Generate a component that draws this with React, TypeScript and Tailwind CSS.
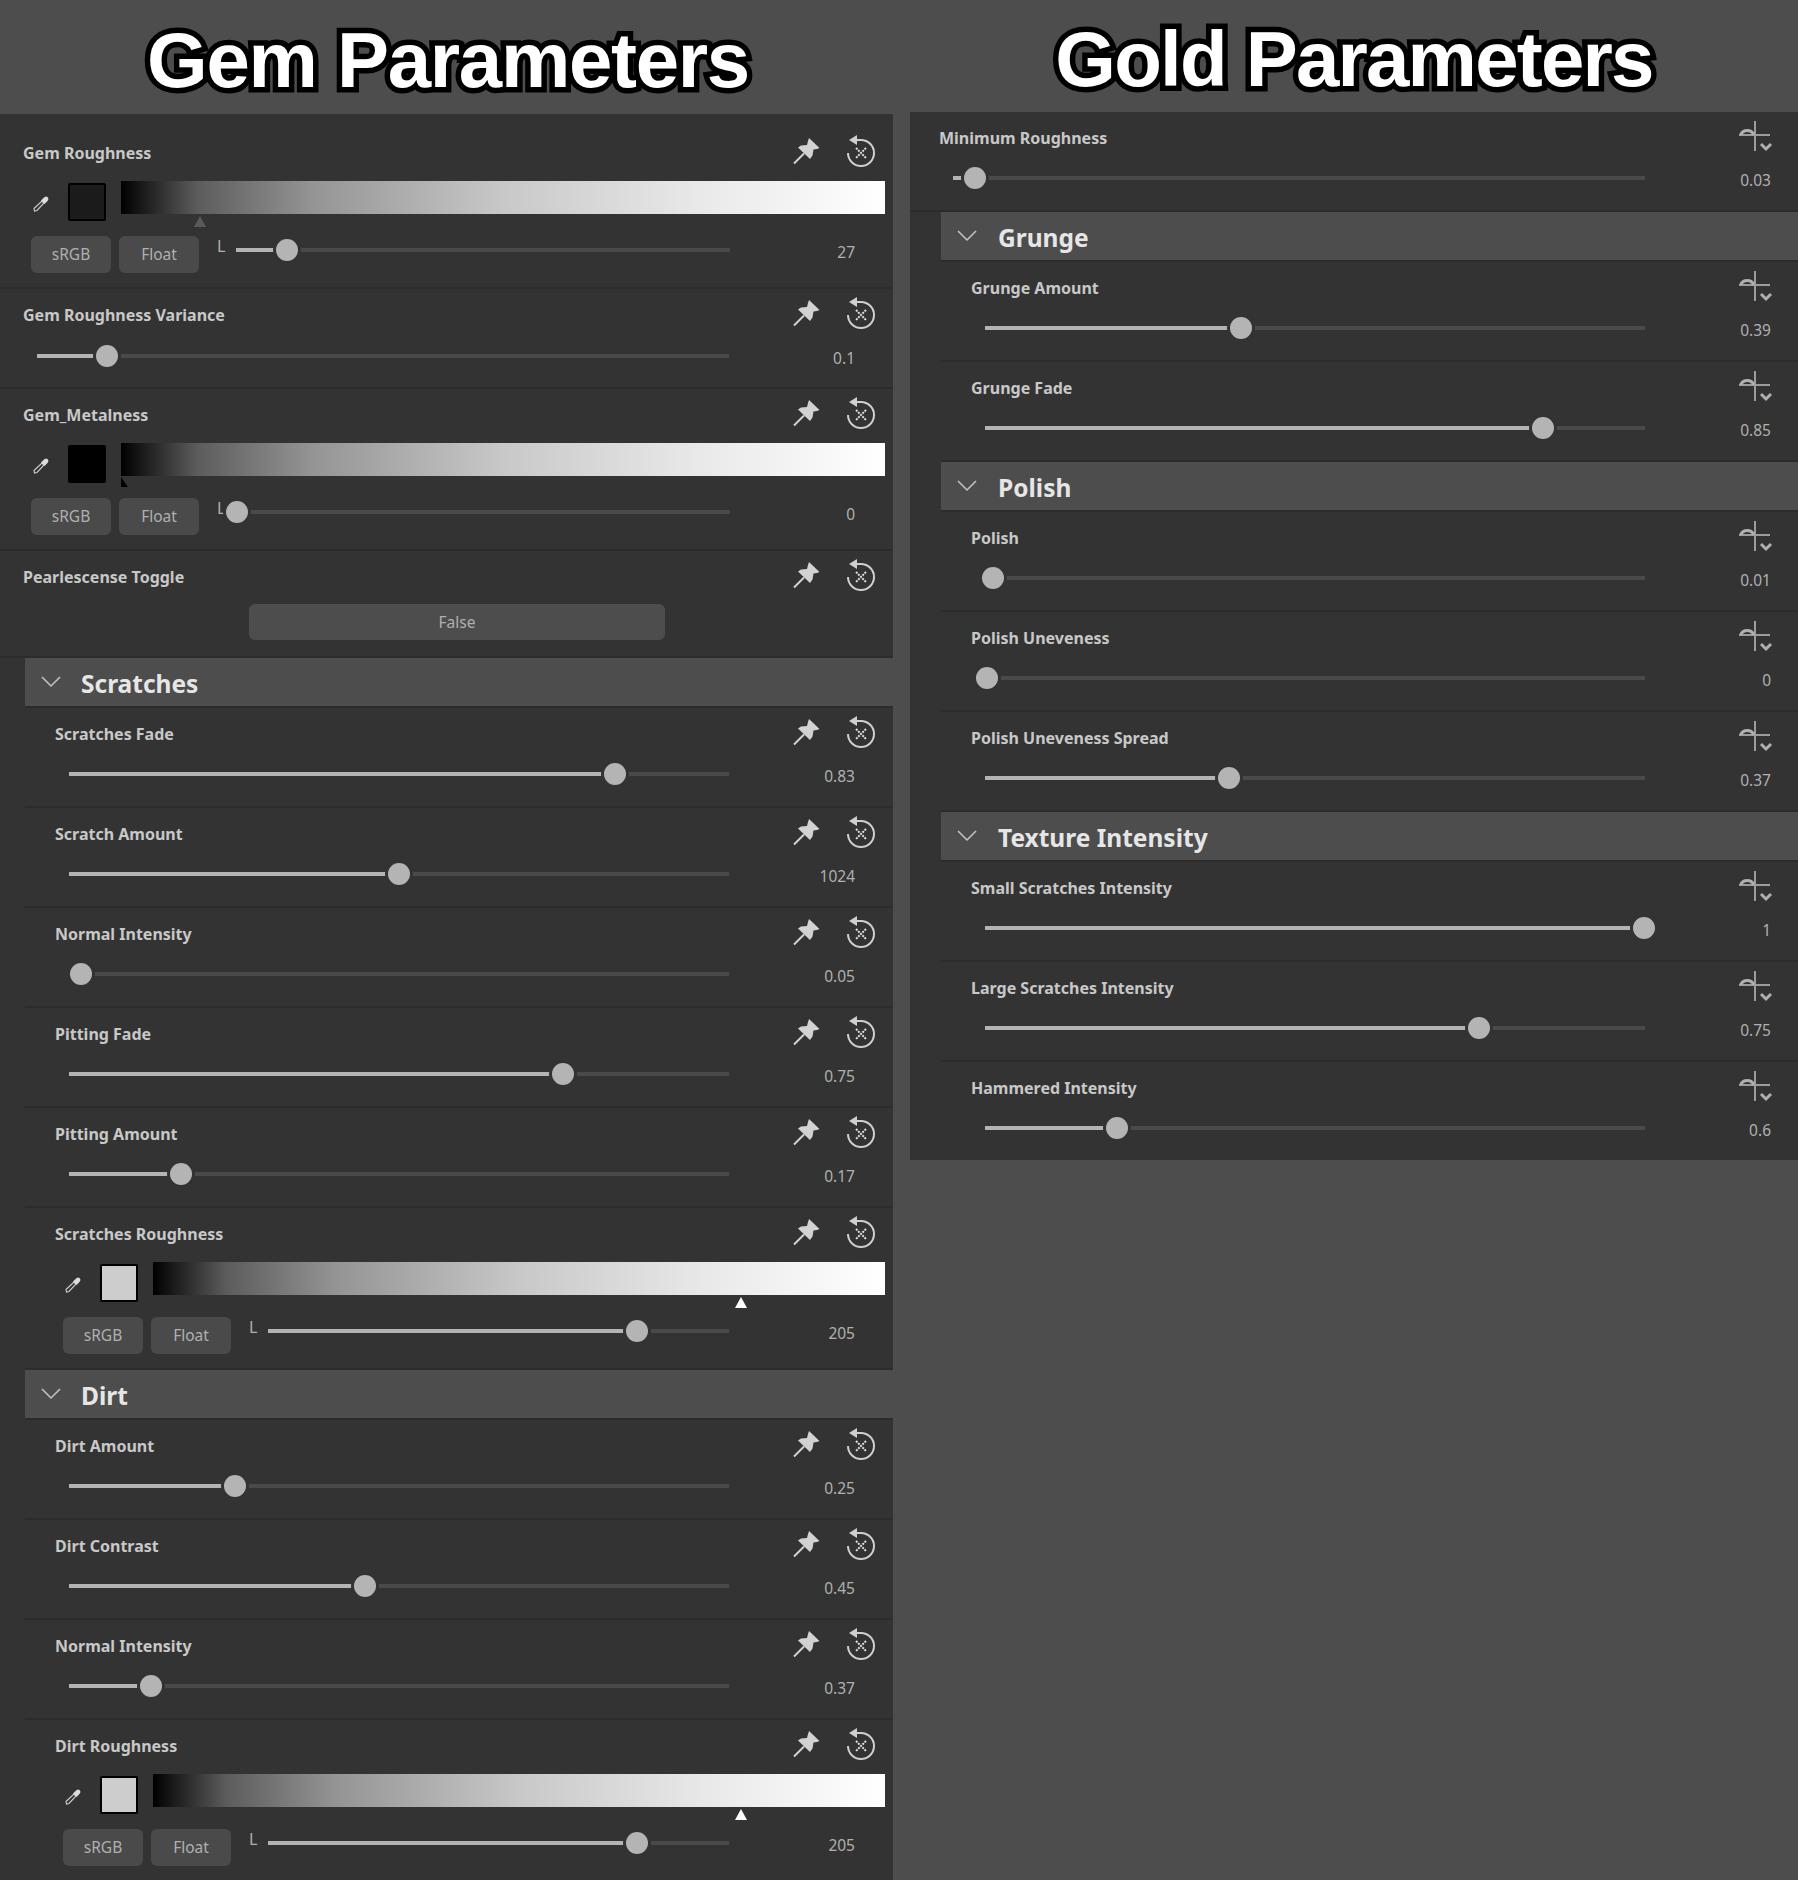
import React from 'react'

const labelFont = { fontFamily: '"Noto Sans", sans-serif' }

function PinIcon() {
  return (
    <svg width="27" height="27" viewBox="0 0 27 27" className="shrink-0 -mt-[3px]">
      <path d="M16 0 L26.5 10 L24 11 L20.5 11.5 L19.5 17.5 L17 21 L5 9.5 L8 7.5 L14 7 L15 3 Z" fill="#d2d2d2" />
      <path d="M11 15.5 L1 25.5" stroke="#d2d2d2" strokeWidth="2" />
    </svg>
  )
}

function ResetIcon() {
  return (
    <svg width="32" height="34" viewBox="0 0 32 34" className="shrink-0 -mt-[2px]">
      <path d="M11 5 H16 A13 13 0 1 1 3 18" fill="none" stroke="#cfcfcf" strokeWidth="2" />
      <path d="M4 5 L12 0 L12 10 Z" fill="#cfcfcf" />
      <path d="M11 13 L21 23 M21 13 L11 23" stroke="#e0e0e0" strokeWidth="2" strokeDasharray="2 1" />
    </svg>
  )
}

function CurveIcon() {
  return (
    <svg width="36" height="34" viewBox="0 0 36 34" className="shrink-0 -translate-y-[2px]">
      <path d="M17 2 V32 M1 16 H32" stroke="#9c9c9c" strokeWidth="2" fill="none" />
      <path d="M2.5 16 A7.5 8 0 0 1 16 16" stroke="#b0b0b0" strokeWidth="3" fill="none" />
      <path d="M23 25 L28 30 L33 25" stroke="#b0b0b0" strokeWidth="3" fill="none" />
    </svg>
  )
}

function Dropper() {
  return (
    <svg width="16" height="16" viewBox="0 0 16 16" className="shrink-0 mt-[15px]">
      <path d="M9 5 L11 7 L4 14.5 L1.5 15 L1 12.5 Z" fill="none" stroke="#cfcfcf" strokeWidth="1.1" />
      <path d="M8 4.5 L10.5 2 Q12.5 -0.5 14.5 1 Q16.5 3 14 5.5 L11.5 8 Z" fill="#dcdcdc" />
    </svg>
  )
}

function Chevron() {
  return (
    <svg width="20" height="12" viewBox="0 0 20 12" className="shrink-0">
      <path d="M1 1 L10 10 L19 1" fill="none" stroke="#c4c4c4" strokeWidth="1.5" />
    </svg>
  )
}

function Track({ width, thumb }: { width: string; thumb: number }) {
  return (
    <div className={`relative h-[4px] shrink-0 bg-[#4a4a4a] ${width}`}>
      <div className="absolute left-0 inset-y-0 bg-[#b4b4b4]" style={{ width: thumb }} />
      <div
        className="absolute -top-[9px] w-[22px] h-[22px] rounded-full bg-[#b4b4b4] ring-3 ring-[#333333]"
        style={{ left: thumb - 11 }}
      />
    </div>
  )
}

function Header({ label, right }: { label: string; right: boolean }) {
  return (
    <div className="flex items-center justify-between h-6">
      <span className="text-[16px] font-bold text-[#c8c8c8]" style={labelFont}>{label}</span>
      {right ? (
        <CurveIcon />
      ) : (
        <div className="flex items-center gap-[25px]">
          <PinIcon />
          <ResetIcon />
        </div>
      )}
    </div>
  )
}

interface SliderRowProps {
  label: string
  value: string
  thumb: number
  side: 'left' | 'right'
  grouped?: boolean
  last?: boolean
}

function SliderRow({ label, value, thumb, side, grouped, last }: SliderRowProps) {
  const right = side === 'right'
  let pad = 'pl-[23px] pr-[16px]'
  if (right) pad = grouped ? 'ml-[31px] pl-[30px] pr-[24px]' : 'pl-[29px] pr-[24px]'
  else if (grouped) pad = 'ml-[25px] pl-[30px] pr-[16px]'
  return (
    <div className={`${pad} pt-[14px] box-border ${last ? 'h-[98px]' : 'h-[100px] border-b-2 border-[#2c2c2c]'}`}>
      <Header label={label} right={right} />
      <div className={`flex items-center h-10 pl-[14px] ${!right && !grouped ? 'mt-[9px]' : 'mt-2'}`}>
        <Track width={grouped ? 'w-[660px]' : 'w-[692px]'} thumb={thumb} />
        <span
          className={`ml-auto mt-[5px] text-[15.5px] text-[#b0b0b0] ${right ? 'pr-[3px]' : 'pr-[22px]'}`}
          style={labelFont}
        >
          {value}
        </span>
      </div>
    </div>
  )
}

interface ColorRowProps {
  label: string
  swatch: string
  marker: number
  markerColor: string
  value: string
  thumb: number
  grouped?: boolean
  first?: boolean
}

function ColorRow({ label, swatch, marker, markerColor, value, thumb, grouped, first }: ColorRowProps) {
  return (
    <div className={`box-border border-b-2 border-[#2c2c2c] ${grouped ? 'ml-[25px]' : ''} ${first ? 'h-[175px] pt-[27px]' : 'h-[162px] pt-[14px]'}`}>
      <div className={grouped ? 'pl-[30px] pr-[16px]' : 'pl-[23px] pr-[16px]'}>
        <Header label={label} right={false} />
      </div>
      <div className={`flex items-start h-[41px] mt-4 pr-2 ${grouped ? 'pl-[40px]' : 'pl-[33px]'}`}>
        <Dropper />
        <div className="w-[38px] h-[38px] ml-[19px] mt-[2px] shrink-0 rounded-[2px] border-2 border-black" style={{ background: swatch }} />
        <div className="relative flex-1 h-[33px] ml-[15px] bg-[linear-gradient(to_right,#000_0%,#1c1c1c_3%,#5c5c5c_10%,#949494_25%,#c8c8c8_50%,#e8e8e8_75%,#fff_100%)]">
          {marker === 0 ? (
            <svg width="8" height="11" viewBox="0 0 8 11" className="absolute top-[34px] left-0">
              <path d="M0 0 L7 10 L0 10 Z" fill={markerColor} />
            </svg>
          ) : (
            <svg width="12" height="11" viewBox="0 0 12 11" className="absolute top-[35px]" style={{ left: marker - 6 }}>
              <path d="M6 0 L12 11 L0 11 Z" fill={markerColor} />
            </svg>
          )}
        </div>
      </div>
      <div className={`flex items-start mt-[14px] ${grouped ? 'pl-[38px]' : 'pl-[31px]'}`}>
        <div className="flex gap-2">
          {['sRGB', 'Float'].map((b) => (
            <div key={b} className="flex items-center justify-center w-20 h-[37px] rounded-md bg-[#4a4a4a] text-[15.5px] text-[#b0b0b0]" style={labelFont}>{b}</div>
          ))}
        </div>
        <span className="w-[19px] ml-[18px] text-[16px] leading-5 text-[#b0b0b0]" style={labelFont}>L</span>
        <div className="mt-[12px]">
          <Track width={grouped ? 'w-[461px]' : 'w-[494px]'} thumb={thumb} />
        </div>
        <span className="ml-auto mr-[38px] mt-[5px] text-[15.5px] text-[#b0b0b0]" style={labelFont}>{value}</span>
      </div>
    </div>
  )
}

function GroupHeader({ title, right }: { title: string; right?: boolean }) {
  return (
    <div className={`flex items-center h-[50px] border-b-2 border-[#2c2c2c] bg-[#4d4d4d] ${right ? 'ml-[31px] pl-[16px]' : 'ml-[25px] pl-[16px]'}`}>
      <Chevron />
      <span className={`mt-[5px] text-[24.5px] font-bold text-[#e6e6e6] ${right ? 'ml-[21px]' : 'ml-[20px]'}`} style={labelFont}>{title}</span>
    </div>
  )
}

function Title({ text, height, tracking }: { text: string; height: string; tracking: string }) {
  return (
    <div className={`flex items-center justify-center ${height}`}>
      <span
        className={`mt-[5px] text-[78px] leading-none font-bold text-white [-webkit-text-stroke:11px_black] [paint-order:stroke_fill] ${tracking}`}
        style={{ fontFamily: '"Liberation Sans", Arial, sans-serif' }}
      >
        {text}
      </span>
    </div>
  )
}

const scratches = [
  { label: 'Scratches Fade', value: '0.83', thumb: 546 },
  { label: 'Scratch Amount', value: '1024', thumb: 330 },
  { label: 'Normal Intensity', value: '0.05', thumb: 12 },
  { label: 'Pitting Fade', value: '0.75', thumb: 494 },
  { label: 'Pitting Amount', value: '0.17', thumb: 112 },
]

const dirt = [
  { label: 'Dirt Amount', value: '0.25', thumb: 166 },
  { label: 'Dirt Contrast', value: '0.45', thumb: 296 },
  { label: 'Normal Intensity', value: '0.37', thumb: 82 },
]

const grunge = [
  { label: 'Grunge Amount', value: '0.39', thumb: 256 },
  { label: 'Grunge Fade', value: '0.85', thumb: 558 },
]

const polish = [
  { label: 'Polish', value: '0.01', thumb: 8 },
  { label: 'Polish Uneveness', value: '0', thumb: 2 },
  { label: 'Polish Uneveness Spread', value: '0.37', thumb: 244 },
]

const texture = [
  { label: 'Small Scratches Intensity', value: '1', thumb: 659 },
  { label: 'Large Scratches Intensity', value: '0.75', thumb: 494 },
]

export default function App() {
  return (
    <div className="flex w-[1798px] h-[1880px] overflow-hidden bg-[#4d4d4d]">
      {/* Gem */}
      <div className="w-[893px] shrink-0">
        <Title text="Gem Parameters" height="h-[114px]" tracking="tracking-[-1.3px] pl-[3px]" />
        <div className="h-[1766px] overflow-hidden bg-[#333333]">
          <ColorRow first label="Gem Roughness" swatch="#1b1b1b" marker={79} markerColor="#5a5a5a" value="27" thumb={51} />
          <SliderRow side="left" label="Gem Roughness Variance" value="0.1" thumb={70} />
          <ColorRow label="Gem_Metalness" swatch="#000000" marker={0} markerColor="#000000" value="0" thumb={1} />
          <div className="box-border h-[107px] pt-[14px] border-b-2 border-[#2c2c2c]">
            <div className="pl-[23px] pr-[16px]">
              <Header label="Pearlescense Toggle" right={false} />
            </div>
            <div className="flex items-center justify-center w-[416px] h-9 ml-[249px] mt-[15px] pt-px rounded-md bg-[#4d4d4d] text-[15.5px] text-[#b0b0b0]" style={labelFont}>False</div>
          </div>
          <GroupHeader title="Scratches" />
          {scratches.map((r) => (
            <SliderRow key={r.label} side="left" grouped {...r} />
          ))}
          <ColorRow grouped label="Scratches Roughness" swatch="#cdcdcd" marker={588} markerColor="#ffffff" value="205" thumb={369} />
          <GroupHeader title="Dirt" />
          {dirt.map((r) => (
            <SliderRow key={r.label} side="left" grouped {...r} />
          ))}
          <ColorRow grouped label="Dirt Roughness" swatch="#cdcdcd" marker={588} markerColor="#ffffff" value="205" thumb={369} />
        </div>
      </div>

      {/* Gold */}
      <div className="flex-1 ml-[17px]">
        <Title text="Gold Parameters" height="h-[112px]" tracking="tracking-[-1.8px]" />
        <div className="bg-[#333333]">
          <SliderRow side="right" label="Minimum Roughness" value="0.03" thumb={22} />
          <GroupHeader right title="Grunge" />
          {grunge.map((r) => (
            <SliderRow key={r.label} side="right" grouped {...r} />
          ))}
          <GroupHeader right title="Polish" />
          {polish.map((r) => (
            <SliderRow key={r.label} side="right" grouped {...r} />
          ))}
          <GroupHeader right title="Texture Intensity" />
          {texture.map((r) => (
            <SliderRow key={r.label} side="right" grouped {...r} />
          ))}
          <SliderRow last side="right" grouped label="Hammered Intensity" value="0.6" thumb={132} />
        </div>
      </div>
    </div>
  )
}
